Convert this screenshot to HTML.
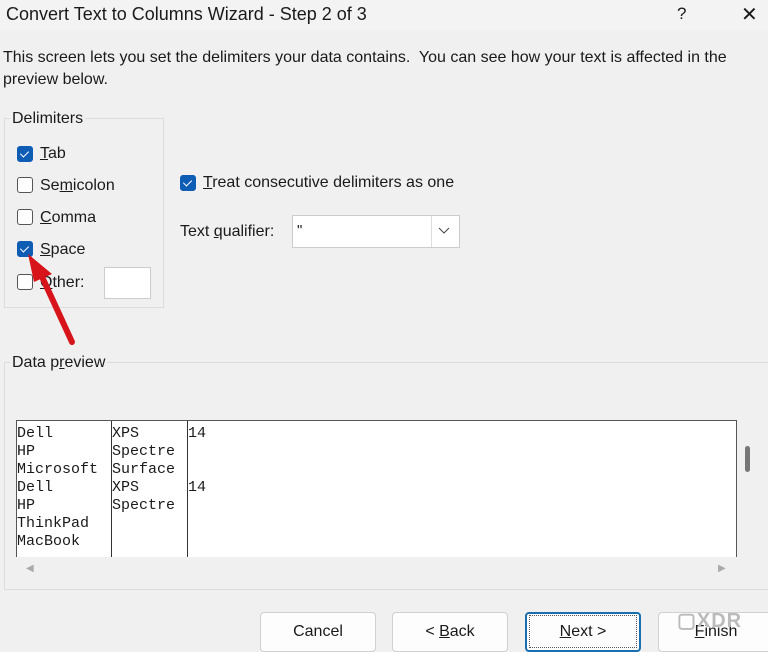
<!DOCTYPE html>
<html><head><style>
body{margin:0;width:768px;height:649px;background:#f0f0f0;font-family:"Liberation Sans",sans-serif;color:#1a1a1a;position:relative;overflow:hidden}
.a{position:absolute;white-space:nowrap}
.t{font-size:16px}
.cb{position:absolute;width:16px;height:16px;border:1px solid #555;border-radius:3px;background:#fff;box-sizing:border-box}
.cb.on{background:#0f5cb5;border-color:#0f5cb5}
.cb.on:after{content:"";position:absolute;left:4px;top:2px;width:4px;height:7px;border:solid #fff;border-width:0 1.5px 1.5px 0;transform:rotate(45deg)}
.btn{position:absolute;top:612px;height:40px;width:116px;background:#fdfdfd;border:1px solid #d0d0d0;border-radius:4px;box-sizing:border-box;text-align:center;line-height:38px;font-size:16px}
.mono{font-family:"Liberation Mono",monospace;font-size:15px;line-height:18px}
u{text-decoration:underline}
</style></head><body>
<div class="a" style="left:0;top:0;width:768px;height:30px;background:#f3f3f3"></div>
<div class="a" style="left:6px;top:4px;font-size:18px">Convert Text to Columns Wizard - Step 2 of 3</div>
<div class="a" style="left:677px;top:4px;font-size:17px">?</div>
<div class="a" style="left:741px;top:2px;font-size:20px">✕</div>
<div class="a t" style="left:3px;top:47px;font-size:16px;line-height:22px;white-space:normal;width:760px">This screen lets you set the delimiters your data contains.&nbsp; You can see how your text is affected in the preview below.</div>
<div class="a" style="left:4px;top:118px;width:160px;height:190px;border:1px solid #dcdcdc;box-sizing:border-box"></div>
<div class="a t" style="left:10px;top:110px;background:#f0f0f0;padding:0 2px">Delimiters</div>
<div class="cb on" style="left:17px;top:146px"></div><div class="a t" style="left:40px;top:145px"><u>T</u>ab</div>
<div class="cb" style="left:17px;top:177px"></div><div class="a t" style="left:40px;top:177px">Se<u>m</u>icolon</div>
<div class="cb" style="left:17px;top:209px"></div><div class="a t" style="left:40px;top:209px"><u>C</u>omma</div>
<div class="cb on" style="left:17px;top:241px"></div><div class="a t" style="left:40px;top:241px"><u>S</u>pace</div>
<div class="cb" style="left:17px;top:274px"></div><div class="a t" style="left:40px;top:274px"><u>O</u>ther:</div>
<div class="a" style="left:104px;top:267px;width:47px;height:32px;background:#fff;border:1px solid #ccc;box-sizing:border-box"></div>
<svg class="a" style="left:0;top:0" width="200" height="360"><path d="M72 342 L38 268" stroke="#d8141b" stroke-width="6" stroke-linecap="round"/><path d="M28 254 L52 274 L34 282 Z" fill="#d8141b"/></svg>
<div class="cb on" style="left:180px;top:175px"></div><div class="a t" style="left:203px;top:174px"><u>T</u>reat consecutive delimiters as one</div>
<div class="a t" style="left:180px;top:223px">Text <u>q</u>ualifier:</div>
<div class="a" style="left:292px;top:215px;width:168px;height:33px;background:#fff;border:1px solid #ccc;box-sizing:border-box"></div>
<div class="a" style="left:297px;top:222px;font-size:15px">"</div>
<div class="a" style="left:431px;top:216px;width:1px;height:31px;background:#ddd"></div>
<svg class="a" style="left:438px;top:227px" width="12" height="8"><path d="M1 1 L6 6 L11 1" stroke="#444" fill="none"/></svg>
<div class="a" style="left:4px;top:362px;width:770px;height:228px;border:1px solid #dcdcdc;box-sizing:border-box"></div>
<div class="a t" style="left:10px;top:354px;background:#f0f0f0;padding:0 2px">Data p<u>r</u>eview</div>
<div class="a" style="left:16px;top:420px;width:721px;height:137px;background:#fff;border:1px solid #555;border-bottom:none;box-sizing:border-box;overflow:hidden">
<div class="a" style="left:94px;top:0;width:1px;height:137px;background:#333"></div>
<div class="a" style="left:170px;top:0;width:1px;height:137px;background:#333"></div>
<div class="a mono" style="left:0;top:4px">Dell<br>HP<br>Microsoft<br>Dell<br>HP<br>ThinkPad<br>MacBook</div>
<div class="a mono" style="left:95px;top:4px">XPS<br>Spectre<br>Surface<br>XPS<br>Spectre</div>
<div class="a mono" style="left:171px;top:4px">14<br><br><br>14</div>
</div>
<div class="a" style="left:745px;top:446px;width:5px;height:26px;background:#777;border-radius:3px"></div>
<div class="a" style="left:26px;top:563px;font-size:10px;color:#aaa">◀</div>
<div class="a" style="left:718px;top:563px;font-size:10px;color:#aaa">▶</div>
<div class="btn" style="left:260px">Cancel</div>
<div class="btn" style="left:392px">&lt; <u>B</u>ack</div>
<div class="btn" style="left:525px;border:2px solid #1a6fb0;line-height:36px"><span style="border:1px dotted #555;padding:7px 30px"><u>N</u>ext &gt;</span></div>
<div class="btn" style="left:658px"><u>F</u>inish</div>
<div class="a" style="left:677px;top:608px;font-size:20px;color:#bbb;letter-spacing:1px;font-weight:bold">▢XDR</div>
</body></html>
